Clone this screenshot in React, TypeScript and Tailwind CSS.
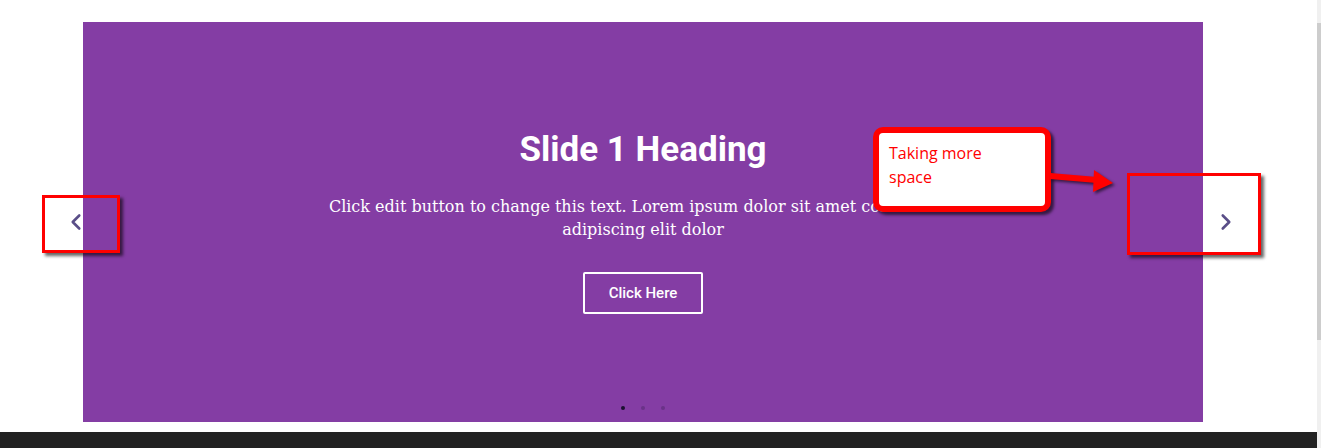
import { ChevronLeft, ChevronRight } from 'lucide-react';

const slides = [0, 1, 2];

const App = () => {
  return (
    <div className="flex h-[448px] w-full overflow-hidden bg-white">
      <div className="flex flex-1 flex-col">
        <div className="relative h-[432px]">
          {/* carousel */}
          <div className="pt-[22px] pl-[83px]">
            <div className="flex h-[400px] w-[1120px] flex-col items-center bg-[#843da4] text-white">
              <h2 className="mt-[104px] font-['Roboto',sans-serif] text-[35px] font-bold leading-[48px]">
                Slide 1 Heading
              </h2>
              <p className="mt-[21px] text-center font-['DejaVu_Serif',serif] text-[16px] leading-[23px]">
                Click edit button to change this text. Lorem ipsum dolor sit amet consectetur
                <br />
                adipiscing elit dolor
              </p>
              <button className="mt-[31px] h-[42px] w-[120px] rounded-[2px] border-2 border-white font-['Roboto',sans-serif] text-[15px] font-medium">
                Click Here
              </button>
              <div className="mt-auto mb-[12px] flex gap-[16px]">
                {slides.map(i => (
                  <span
                    key={i}
                    className={`h-[4px] w-[4px] rounded-full ${i === 0 ? 'bg-[#1a1030]' : 'bg-[#6a3288]'}`}
                  />
                ))}
              </div>
            </div>
          </div>

          {/* nav arrows */}
          <ChevronLeft className="absolute left-[63px] top-[209px] h-[26px] w-[26px] text-[#5a4e88]" strokeWidth={2.4} />
          <ChevronRight className="absolute left-[1213px] top-[209px] h-[26px] w-[26px] text-[#5a4e88]" strokeWidth={2.4} />

          {/* annotation boxes */}
          <div className="absolute left-[42px] top-[195px] h-[58px] w-[78px] border-[3px] border-[#ff0000] shadow-[3px_3px_3px_rgba(0,0,0,0.6)]" />
          <div className="absolute left-[1127px] top-[173px] h-[82px] w-[134px] border-[3px] border-[#ff0000] shadow-[3px_3px_3px_rgba(0,0,0,0.6)]" />

          {/* callout */}
          <div className="absolute left-[873px] top-[127px] h-[85px] w-[178px] rounded-[10px] border-[6px] border-[#ff0000] bg-white pl-[10px] pt-[8px] font-['Open_Sans',sans-serif] text-[16px] leading-[24px] text-[#ff0000] shadow-[3px_3px_3px_rgba(0,0,0,0.6)]">
            Taking more
            <br />
            space
          </div>
          <svg className="absolute left-[1049px] top-[166px]" width="70" height="30" viewBox="0 0 70 30">
            <g style={{ filter: 'drop-shadow(2px 2px 1.5px rgba(0,0,0,0.6))' }}>
              <path d="M1 10 L48 14" stroke="#ff0000" strokeWidth="6" fill="none" />
              <path d="M45 4 L64 17 L44 26 Z" fill="#ff0000" />
            </g>
          </svg>
        </div>
        <div className="h-[16px] bg-[#222222]" />
      </div>

      {/* scrollbar */}
      <div className="flex w-[4px] flex-col bg-[#f0f0f0]">
        <div className="mt-[23px] h-[317px] bg-[#cdcdcd]" />
      </div>
    </div>
  );
};

export default App;
